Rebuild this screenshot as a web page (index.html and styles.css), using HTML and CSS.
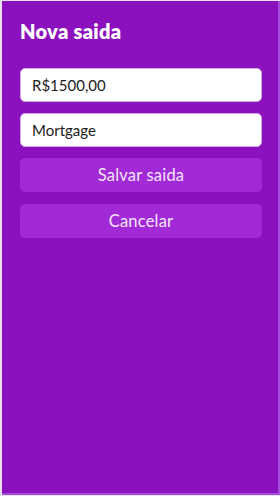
FILE: index.html
```html
<!DOCTYPE html>
<html lang="pt-BR">

<head>
     <meta charset="UTF-8" />
     <title>Nova saida</title>
     <meta name="viewport" content="width=device-width, initial-scale=1" />
     <link rel="stylesheet" href="styles.css">
</head>

<body>

     <div class="screen">
          <h1>Nova saida</h1>

          <form class="form">
               <input type="text" value="R$1500,00">
               <input type="text" value="Mortgage">
               <button type="button">Salvar saida</button>
               <button type="button">Cancelar</button>
          </form>
     </div>

</body>

</html>
```

FILE: styles.css
```css
:root {
     --bg: #8c11be;
     --btn: #a22ad6;
     --edge: #a34ddb;
}

* {
     box-sizing: border-box;
     margin: 0;
     padding: 0;
}

body {
     font-family: 'Lato', 'Noto Sans', sans-serif;
     background: #e6e1ea;
     padding: 1px 0 0 2px;
}

.screen {
     background: var(--bg);
     height: 494px;
     width: 278px;
     padding: 19px 16px 0 18px;
     border-right: 2px solid var(--edge);
     border-bottom: 2px solid var(--edge);
}

h1 {
     color: white;
     font-size: 20px;
     font-weight: 800;
     line-height: 22px;
     letter-spacing: 0.3px;
}

.form {
     display: flex;
     flex-direction: column;
     gap: 11px;
     margin-top: 26px;
}

.form input {
     height: 34px;
     border: 1px solid #cfa8e6;
     border-radius: 5px;
     padding: 0 11px;
     font-family: inherit;
     font-size: 15px;
     color: #1d1d1d;
     background: white;
     outline: none;
}

.form button {
     height: 34px;
     border: none;
     border-radius: 5px;
     background: var(--btn);
     color: #f4e6fb;
     font-family: inherit;
     font-size: 16.5px;
     letter-spacing: 0.2px;
     cursor: pointer;
}

.form button + button {
     margin-top: 1px;
}
```
